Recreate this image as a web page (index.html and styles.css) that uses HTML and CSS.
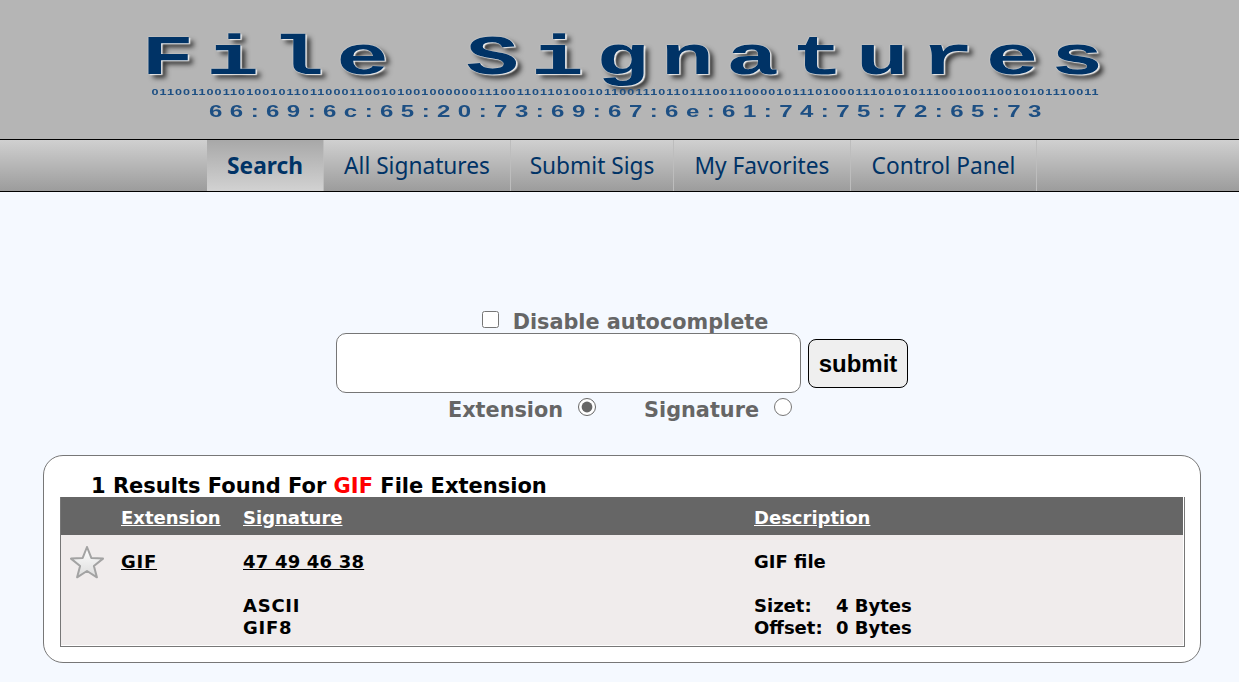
FILE: index.html
```html
<!DOCTYPE html>
<html lang="en">
<head>
    <meta charset="UTF-8">
    <meta name="viewport" content="width=device-width, initial-scale=1.0">
    <title>File Signatures</title>
    <link rel="stylesheet" href="styles.css">
</head>
<body>

<header class="banner">
    <div class="logo-title">File Signatures</div>
    <div class="logo-binary">011001100110100101101100011001010010000001110011011010010110011101101110011000010111010001110101011100100110010101110011</div>
    <div class="logo-hex">66:69:6c:65:20:73:69:67:6e:61:74:75:72:65:73</div>
</header>

<nav class="nav">
    <a href="#" class="tab active">Search</a>
    <a href="#" class="tab">All Signatures</a>
    <a href="#" class="tab">Submit Sigs</a>
    <a href="#" class="tab">My Favorites</a>
    <a href="#" class="tab">Control Panel</a>
</nav>

<main class="main">
    <form class="search" onsubmit="return false">
        <label class="auto-row"><input type="checkbox" class="check"> Disable autocomplete</label>
        <div class="input-row">
            <input type="text" class="search-input">
            <button class="submit">submit</button>
        </div>
        <div class="radio-row">
            <label class="radio-label">Extension <input type="radio" name="mode" class="radio" checked></label>
            <label class="radio-label">Signature <input type="radio" name="mode" class="radio"></label>
        </div>
    </form>

    <section class="results">
        <h2 class="results-title">1 Results Found For <span class="hit">GIF</span> File Extension</h2>
        <table class="sig-table">
            <thead>
                <tr>
                    <th class="col-star"></th>
                    <th class="col-ext"><a href="#">Extension</a></th>
                    <th class="col-sig"><a href="#">Signature</a></th>
                    <th><a href="#">Description</a></th>
                </tr>
            </thead>
            <tbody>
                <tr>
                    <td class="star-cell">
                        <svg class="star" width="36" height="34" viewBox="0 0 36 34">
                            <defs>
                                <linearGradient id="starFill" x1="0" y1="0" x2="0" y2="1">
                                    <stop offset="0" stop-color="#ffffff"/>
                                    <stop offset="1" stop-color="#dcdcdc"/>
                                </linearGradient>
                            </defs>
                            <path d="M18 2 L22.3 12.9 L34 13.6 L24.9 21 L27.9 32.3 L18 26 L8.1 32.3 L11.1 21 L2 13.6 L13.7 12.9 Z" fill="url(#starFill)" stroke="#a3a3a3" stroke-width="2" stroke-linejoin="round"/>
                        </svg>
                    </td>
                    <td class="cell-top"><a href="#" class="caps">GIF</a></td>
                    <td class="cell-top"><a href="#" class="hex">47 49 46 38</a></td>
                    <td class="cell-top">GIF file</td>
                </tr>
                <tr>
                    <td></td>
                    <td></td>
                    <td class="cell-bottom"><span class="caps">ASCII<br>GIF8</span></td>
                    <td class="cell-bottom">
                        <div class="meta"><span class="meta-key">Sizet:</span>4 Bytes</div>
                        <div class="meta"><span class="meta-key">Offset:</span>0 Bytes</div>
                    </td>
                </tr>
            </tbody>
        </table>
    </section>
</main>

</body>
</html>
```

FILE: styles.css
```css
html, body {
    margin: 0;
    height: 100%;
}
body {
    background-color: #f5f9ff;
    font-family: "DejaVu Sans", Verdana, sans-serif;
    overflow: hidden;
}
a {
    color: inherit;
}

.banner {
    height: 139px;
    background: #b5b5b5;
    border-bottom: 1px solid #000;
    display: flex;
    flex-direction: column;
    align-items: center;
    color: #003366;
    overflow: hidden;
}
.logo-title {
    font-family: "Liberation Mono", monospace;
    font-weight: bold;
    font-size: 55px;
    line-height: 50px;
    margin-top: 35px;
    margin-left: 18px;
    letter-spacing: 7.6px;
    white-space: pre;
    transform: scaleX(1.6);
    text-shadow: 0 0 1px #fff, 1px 1px 1px #eee, 3px 4px 4px #333;
}
.logo-binary {
    font-family: "Liberation Sans", sans-serif;
    font-weight: bold;
    font-size: 9px;
    line-height: 12px;
    letter-spacing: 0.75px;
    color: #1d4f83;
    margin-top: 1px;
    margin-left: 12px;
    white-space: nowrap;
    transform: scaleX(1.4);
}
.logo-hex {
    font-family: "Liberation Sans", sans-serif;
    font-weight: bold;
    font-size: 16px;
    line-height: 20px;
    letter-spacing: 4.96px;
    color: #1d4f83;
    margin-top: 4px;
    margin-left: 18px;
    white-space: nowrap;
    transform: scaleX(1.5);
}

.nav {
    height: 51px;
    border-bottom: 1px solid #000;
    background: linear-gradient(#d0d0d0, #9c9c9c);
    display: flex;
    padding-left: 207px;
}
.tab {
    display: flex;
    align-items: center;
    justify-content: center;
    box-sizing: border-box;
    padding-bottom: 1px;
    border-right: 1px solid #bdbdbd;
    font-family: "Noto Sans", sans-serif;
    font-size: 22.7px;
    color: #003366;
    text-decoration: none;
}
.tab:nth-child(1) { width: 117px; }
.tab:nth-child(2) { width: 187px; }
.tab:nth-child(3) { width: 163px; }
.tab:nth-child(4) { width: 177px; }
.tab:nth-child(5) { width: 186px; }
.tab.active {
    font-weight: bold;
    background: linear-gradient(#a8a8a8, #d2d2d2);
}

.main {
    padding-top: 118px;
}
.search {
    display: flex;
    flex-direction: column;
    align-items: center;
    color: #666;
    font-weight: bold;
    font-size: 20.8px;
}
.auto-row {
    display: flex;
    align-items: center;
    gap: 14px;
    padding-top: 2px;
    line-height: 21px;
    margin-left: 11px;
}
.check {
    width: 17px;
    height: 17px;
    margin: -2px 0 4px;
}
.input-row {
    display: flex;
    align-items: center;
    gap: 7px;
    margin-left: 5px;
}
.search-input {
    width: 465px;
    height: 60px;
    box-sizing: border-box;
    border: 1px solid #767676;
    border-radius: 10px;
    background: #fff;
    padding: 0 8px;
}
.submit {
    width: 100px;
    height: 49px;
    padding: 2px 0 0;
    border: 1px solid #000;
    border-radius: 8px;
    background: #efefef;
    font-family: "Liberation Sans", sans-serif;
    font-weight: bold;
    font-size: 24px;
    color: #000;
}
.radio-row {
    display: flex;
    gap: 48px;
    padding-top: 2px;
    margin-left: 1px;
    line-height: 31px;
}
.radio-label {
    display: flex;
    align-items: center;
    gap: 15px;
}
.radio {
    width: 18px;
    height: 18px;
    margin: 0 0 8px;
    accent-color: #666;
}

.results {
    margin: 29px 38px 0 43px;
    height: 208px;
    box-sizing: border-box;
    background: #fff;
    border: 1px solid #777;
    border-radius: 20px;
    padding: 19px 15px 15px 16px;
}
.results-title {
    margin: 0 0 0 31px;
    font-size: 21px;
    line-height: 22px;
    color: #000;
}
.hit {
    color: #f00;
}
.sig-table {
    width: 1125px;
    border-collapse: separate;
    border-spacing: 0;
    table-layout: fixed;
    border: 1px solid #777;
    border-top: none;
    padding: 0 1px 1px 0;
    background: #fff;
    font-size: 18px;
    color: #000;
    text-align: left;
}
.sig-table th {
    height: 38px;
    box-sizing: border-box;
    padding: 2px 0 0;
    background: #666;
    color: #fff;
    font-weight: bold;
}
.col-star { width: 60px; }
.col-ext { width: 122px; }
.col-sig { width: 511px; }
.sig-table td {
    padding: 0;
    background: #f0ecec;
    font-weight: bold;
    vertical-align: top;
}
.sig-table .star-cell {
    padding-left: 8px;
}
.star {
    display: block;
    margin-top: 10px;
    filter: blur(0.5px);
}
.sig-table .cell-top {
    padding: 16px 0 22px;
    line-height: 22px;
}
.sig-table .cell-bottom {
    padding-bottom: 6px;
    line-height: 22px;
}
.caps {
    letter-spacing: 0.75px;
}
.hex {
    letter-spacing: 0.2px;
}
.meta-key {
    display: inline-block;
    width: 82px;
}
```
